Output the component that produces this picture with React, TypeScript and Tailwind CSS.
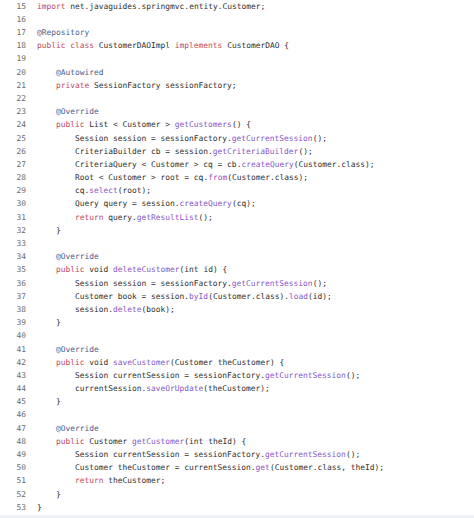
import React from 'react';

const KEYWORDS = new Set(['import', 'public', 'class', 'implements', 'private', 'return']);

const lines: string[] = [
  'import net.javaguides.springmvc.entity.Customer;',
  '',
  '@Repository',
  'public class CustomerDAOImpl implements CustomerDAO {',
  '',
  '    @Autowired',
  '    private SessionFactory sessionFactory;',
  '',
  '    @Override',
  '    public List < Customer > getCustomers() {',
  '        Session session = sessionFactory.getCurrentSession();',
  '        CriteriaBuilder cb = session.getCriteriaBuilder();',
  '        CriteriaQuery < Customer > cq = cb.createQuery(Customer.class);',
  '        Root < Customer > root = cq.from(Customer.class);',
  '        cq.select(root);',
  '        Query query = session.createQuery(cq);',
  '        return query.getResultList();',
  '    }',
  '',
  '    @Override',
  '    public void deleteCustomer(int id) {',
  '        Session session = sessionFactory.getCurrentSession();',
  '        Customer book = session.byId(Customer.class).load(id);',
  '        session.delete(book);',
  '    }',
  '',
  '    @Override',
  '    public void saveCustomer(Customer theCustomer) {',
  '        Session currentSession = sessionFactory.getCurrentSession();',
  '        currentSession.saveOrUpdate(theCustomer);',
  '    }',
  '',
  '    @Override',
  '    public Customer getCustomer(int theId) {',
  '        Session currentSession = sessionFactory.getCurrentSession();',
  '        Customer theCustomer = currentSession.get(Customer.class, theId);',
  '        return theCustomer;',
  '    }',
  '}',
];

// split a line into coloured pieces: keywords, annotations, method calls
function tokens(line: string) {
  const out: { text: string; cls: string }[] = [];
  const re = /(@\w+)|([A-Za-z_]\w*)(?=\()|([A-Za-z_]\w*)|([^A-Za-z_@]+)/g;
  let m: RegExpExecArray | null;
  while ((m = re.exec(line))) {
    const afterDot = m.index > 0 && line[m.index - 1] === '.';
    if (m[1]) out.push({ text: m[1], cls: 'text-[#4a5b8c]' });
    else if (m[2]) out.push({ text: m[2], cls: 'text-[#8556c8]' });
    else if (m[3])
      out.push({ text: m[3], cls: KEYWORDS.has(m[3]) && !afterDot ? 'text-[#c0485c]' : 'text-[#2e2e2e]' });
    else out.push({ text: m[4], cls: 'text-[#2e2e2e]' });
  }
  return out;
}

export default function App() {
  return (
    <div className="w-[474px] h-[518px] bg-white overflow-hidden flex flex-col font-['DejaVu_Sans_Mono',monospace] text-[7.9px]">
      <div className="flex flex-col">
        {lines.map((line, i) => (
          <div key={i} className="flex h-[13.2px] items-center whitespace-pre">
            <span className="w-[26px] text-right text-[#6a6a6a]">{i + 15}</span>
            <span className="ml-[11px]">
              {tokens(line).map((t, j) => (
                <span key={j} className={t.cls}>{t.text}</span>
              ))}
            </span>
          </div>
        ))}
      </div>
      <div className="flex-1 mt-[1px] bg-[#eef1f5]" />
    </div>
  );
}
